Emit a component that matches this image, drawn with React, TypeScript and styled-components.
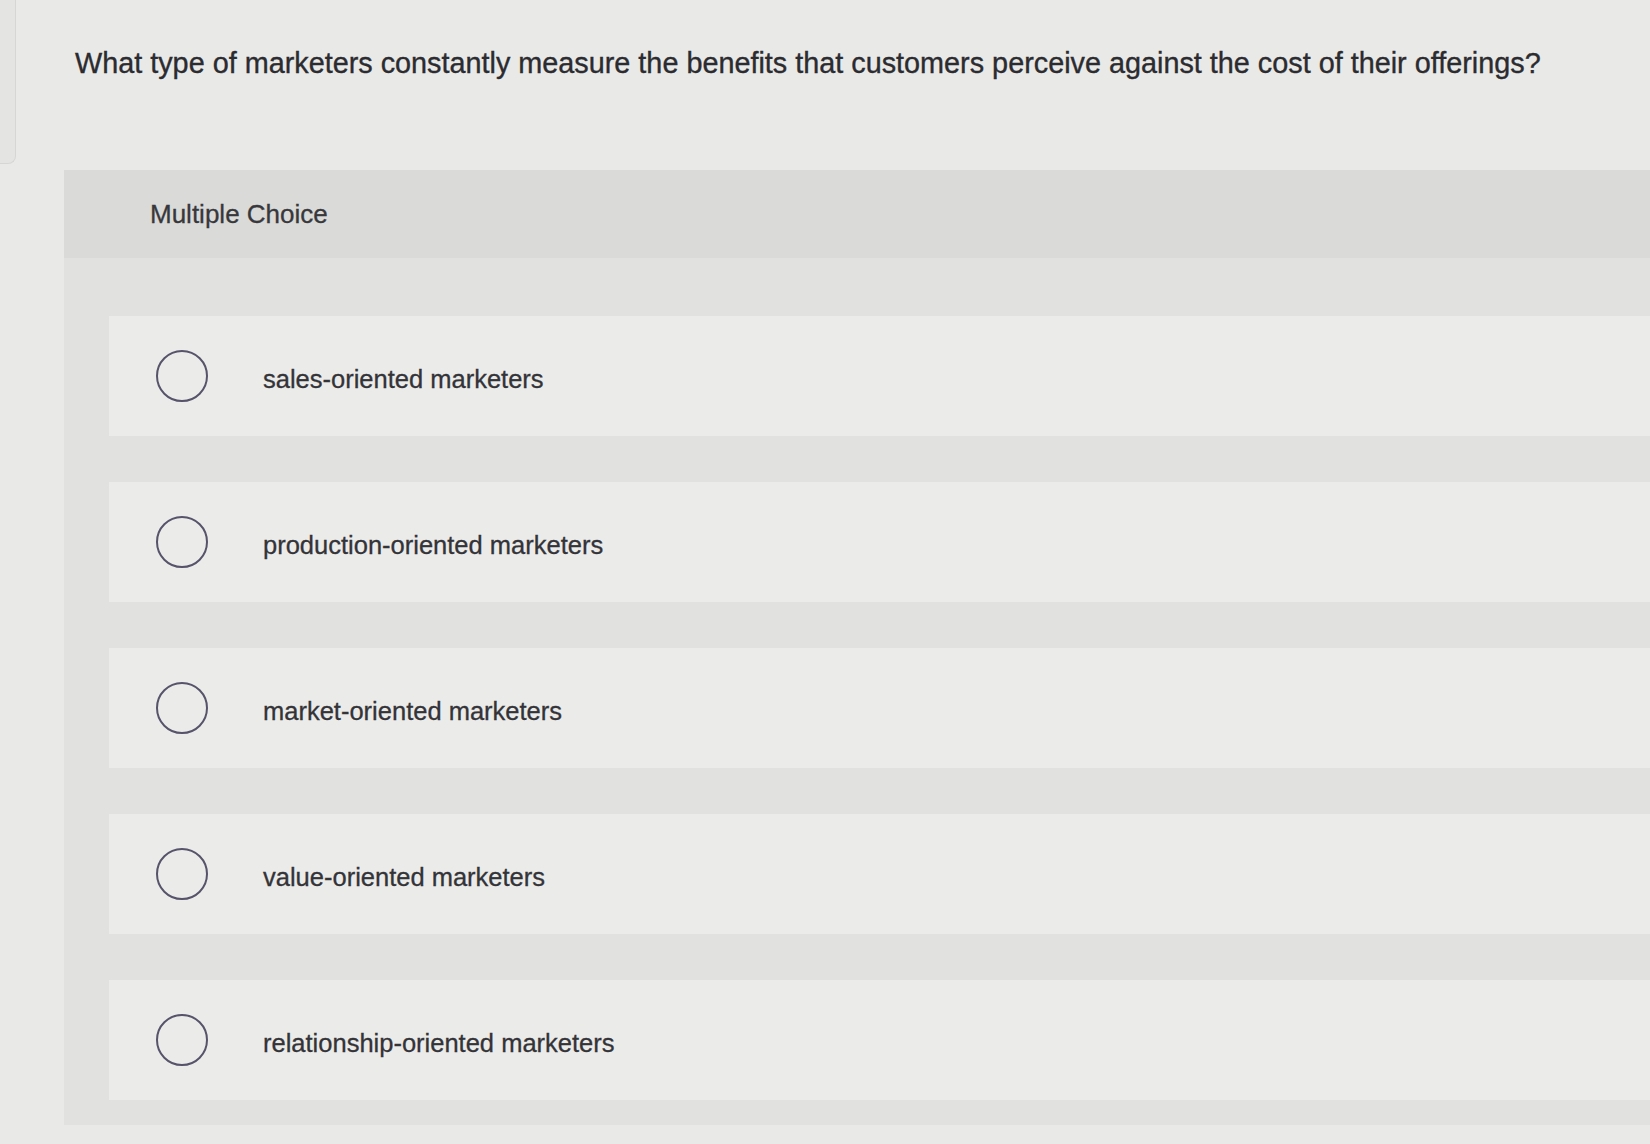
import styled, { createGlobalStyle } from 'styled-components';

const GlobalStyle = createGlobalStyle`
  html, body {
    margin: 0;
    padding: 0;
    background: #e9e9e7;
  }
  body {
    font-family: "Liberation Sans", Arial, sans-serif;
    color: #2e2e33;
  }
`;

const choices = [
  'sales-oriented marketers',
  'production-oriented marketers',
  'market-oriented marketers',
  'value-oriented marketers',
  'relationship-oriented marketers',
];

const App = () => {
  return (
    <>
      <GlobalStyle />
      <Page>
        <QuestionArea>
          <SideTab />
          <Question>
            What type of marketers constantly measure the benefits that customers perceive
            against the cost of their offerings?
          </Question>
        </QuestionArea>
        <Panel>
          <PanelHeader>Multiple Choice</PanelHeader>
          <ChoiceList>
            {choices.map((c) => (
              <ChoiceRow key={c}>
                <Radio />
                <ChoiceLabel>{c}</ChoiceLabel>
              </ChoiceRow>
            ))}
          </ChoiceList>
        </Panel>
      </Page>
    </>
  );
};

export default App;

const Page = styled.div`
  width: 1650px;
  height: 1144px;
  overflow: hidden;
  display: flex;
  flex-direction: column;
`;

const QuestionArea = styled.div`
  display: flex;
  height: 170px;
  flex-shrink: 0;
`;

const SideTab = styled.div`
  width: 15px;
  height: 163px;
  flex-shrink: 0;
  background: #e4e4e2;
  border-right: 1px solid #d6d6d4;
  border-bottom: 1px solid #d6d6d4;
  border-bottom-right-radius: 8px;
`;

const Question = styled.p`
  margin: 46px 0 0 59px;
  font-size: 28.8px;
  line-height: 34px;
  color: #2b2b30;
  white-space: nowrap;
  -webkit-text-stroke: 0.35px #2b2b30;
`;

const Panel = styled.div`
  margin-left: 64px;
  padding-bottom: 25px;
  background: #e1e1df;
  display: flex;
  flex-direction: column;
`;

const PanelHeader = styled.div`
  height: 88px;
  display: flex;
  align-items: center;
  padding-left: 86px;
  background: #dadad8;
  font-size: 26px;
  color: #38383c;
  -webkit-text-stroke: 0.3px #38383c;
`;

const ChoiceList = styled.div`
  display: flex;
  flex-direction: column;
  gap: 46px;
  padding: 58px 0 0 45px;
`;

const ChoiceRow = styled.label`
  height: 120px;
  display: flex;
  align-items: center;
  padding-left: 47px;
  background: #ebebe9;
  cursor: pointer;
`;

const Radio = styled.span`
  width: 48px;
  height: 48px;
  flex-shrink: 0;
  border: 2px solid #56536a;
  border-radius: 50%;
`;

const ChoiceLabel = styled.span`
  margin-left: 55px;
  padding-top: 6px;
  font-size: 25.5px;
  color: #333338;
  -webkit-text-stroke: 0.3px #333338;
`;
